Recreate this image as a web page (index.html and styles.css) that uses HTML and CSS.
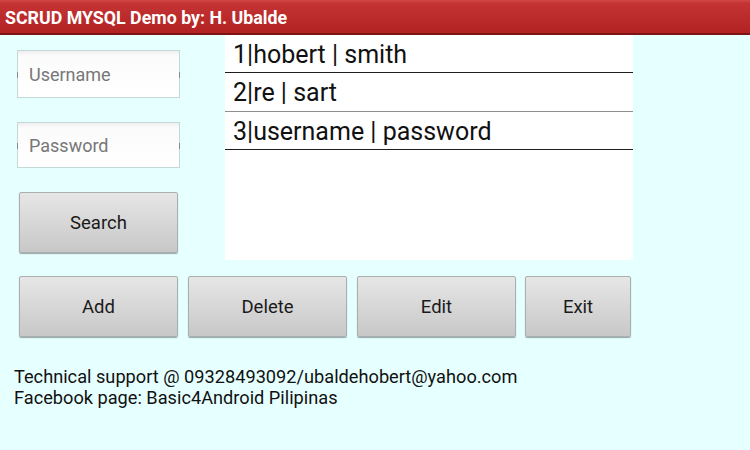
FILE: index.html
```html
<!DOCTYPE html>
<html>
<head>
<meta charset="utf-8">
<link rel="stylesheet" href="styles.css">
</head>
<body>
<header class="titlebar">SCRUD MYSQL Demo by: H. Ubalde</header>
<main class="content">
  <section class="top">
    <div class="form">
      <div class="field"><span class="ph">Username</span></div>
      <div class="field field-pw"><span class="ph">Password</span></div>
      <button class="btn btn-search">Search</button>
    </div>
    <div class="list">
      <div class="row">1|hobert | smith</div>
      <div class="row row-gray">2|re | sart</div>
      <div class="row">3|username | password</div>
    </div>
  </section>
  <section class="actions">
    <button class="btn">Add</button>
    <button class="btn">Delete</button>
    <button class="btn">Edit</button>
    <button class="btn btn-exit">Exit</button>
  </section>
  <footer class="info">
    <div>Technical support @ 09328493092/ubaldehobert@yahoo.com</div>
    <div>Facebook page: Basic4Android Pilipinas</div>
  </footer>
</main>
</body>
</html>
```
FILE: styles.css
```css
html, body {
  margin: 0;
  padding: 0;
}
body {
  width: 750px;
  height: 450px;
  background: #e6ffff;
  font-family: Roboto, "Liberation Sans", sans-serif;
  overflow: hidden;
}
.titlebar {
  box-sizing: border-box;
  height: 35px;
  background: linear-gradient(#d24848 0, #c53434 3px, #b22222 100%);
  border-bottom: 2px solid #7c1414;
  color: #ffffff;
  font-weight: bold;
  font-size: 17.8px;
  line-height: 31px;
  padding-top: 2px;
  padding-left: 5px;
}
.content {
  display: flex;
  flex-direction: column;
}
.top {
  display: flex;
  height: 225px;
}
.form {
  width: 208px;
  padding-left: 17px;
  display: flex;
  flex-direction: column;
  align-items: flex-start;
}
.field {
  position: relative;
  margin-top: 15px;
  width: 163px;
  height: 48px;
  box-sizing: border-box;
  border: 1px solid #c4d8d8;
  background: linear-gradient(#efefef 0, #fbfbfb 5px, #ffffff 100%);
  display: flex;
  align-items: center;
  padding-left: 11px;
}
.field::before, .field::after {
  content: "";
  position: absolute;
  top: 21px;
  width: 1px;
  height: 6px;
  background: #8a8a8a;
}
.field::before { left: -1px; }
.field::after { right: -1px; }
.field-pw {
  margin-top: 24px;
  height: 46px;
}
.field-pw::before, .field-pw::after { top: 20px; }
.ph {
  color: #777777;
  font-size: 18px;
}
.btn {
  font-family: Roboto, "Liberation Sans", sans-serif;
  font-size: 18.5px;
  color: #1a1a1a;
  width: 159px;
  height: 61px;
  box-sizing: border-box;
  border: 1px solid #a9aeae;
  border-radius: 2px;
  background: linear-gradient(#e6e6e6, #c8c8c8);
  box-shadow: 0 1px 1px rgba(0, 0, 0, 0.35);
  padding: 0;
}
.btn-search {
  margin-top: 24px;
  margin-left: 2px;
}
.list {
  width: 408px;
  height: 225px;
  background: #ffffff;
}
.row {
  height: 38px;
  box-sizing: border-box;
  border-bottom: 1px solid #1e1e1e;
  font-size: 25px;
  color: #111111;
  line-height: 35px;
  padding-top: 2px;
  padding-left: 8px;
}
.row-gray {
  border-bottom: 1px solid #8e8e8e;
  height: 39px;
}
.actions {
  display: flex;
  gap: 10px;
  padding-left: 19px;
  margin-top: 16px;
}
.btn-exit {
  width: 106px;
  margin-left: -1px;
}
.info {
  margin-top: 29px;
  padding-left: 14px;
  font-size: 18.2px;
  line-height: 21px;
  color: #111111;
}
```
